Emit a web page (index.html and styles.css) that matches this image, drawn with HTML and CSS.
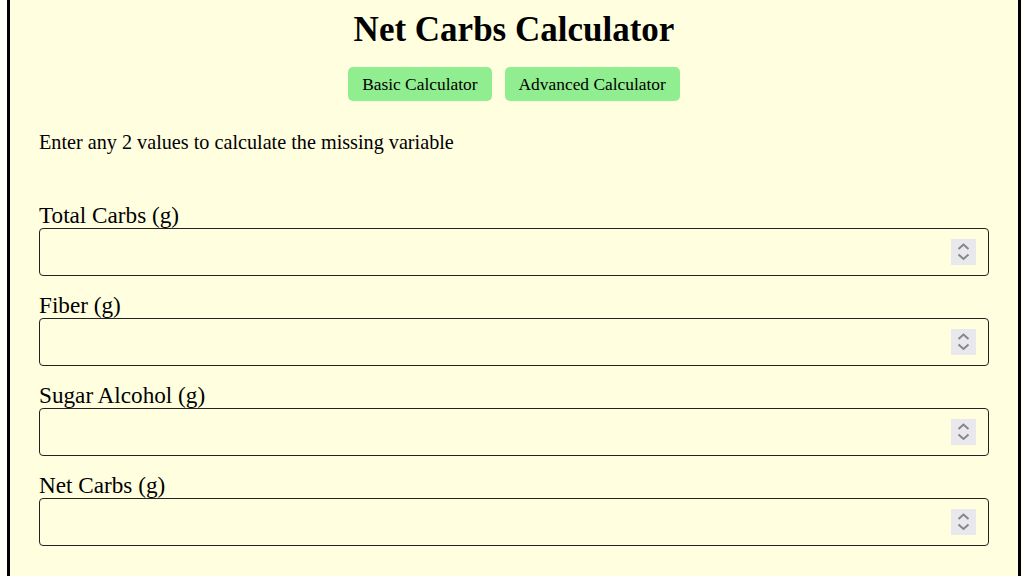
FILE: index.html
```html
<!DOCTYPE html>
<html lang="en">
<head>
<meta charset="utf-8">
<title>Net Carbs Calculator</title>
<link rel="stylesheet" href="styles.css">
</head>
<body>
<div class="page">
  <h1 class="title">Net Carbs Calculator</h1>
  <div class="tabs">
    <button class="tab" type="button">Basic Calculator</button>
    <button class="tab" type="button">Advanced Calculator</button>
  </div>
  <p class="intro">Enter any 2 values to calculate the missing variable</p>
  <form class="form">
    <div class="field">
      <label class="label" for="total">Total Carbs (g)</label>
      <div class="input-wrap">
        <input class="input" id="total" type="number">
        <span class="spin" aria-hidden="true"><svg viewBox="0 0 25 26" width="25" height="26"><path d="M7.5 10 L12.5 5.5 L17.5 10 M7.5 15.5 L12.5 20 L17.5 15.5" fill="none" stroke="#85858d" stroke-width="2"/></svg></span>
      </div>
    </div>
    <div class="field">
      <label class="label" for="fiber">Fiber (g)</label>
      <div class="input-wrap">
        <input class="input" id="fiber" type="number">
        <span class="spin" aria-hidden="true"><svg viewBox="0 0 25 26" width="25" height="26"><path d="M7.5 10 L12.5 5.5 L17.5 10 M7.5 15.5 L12.5 20 L17.5 15.5" fill="none" stroke="#85858d" stroke-width="2"/></svg></span>
      </div>
    </div>
    <div class="field">
      <label class="label" for="sugar">Sugar Alcohol (g)</label>
      <div class="input-wrap">
        <input class="input" id="sugar" type="number">
        <span class="spin" aria-hidden="true"><svg viewBox="0 0 25 26" width="25" height="26"><path d="M7.5 10 L12.5 5.5 L17.5 10 M7.5 15.5 L12.5 20 L17.5 15.5" fill="none" stroke="#85858d" stroke-width="2"/></svg></span>
      </div>
    </div>
    <div class="field">
      <label class="label" for="net">Net Carbs (g)</label>
      <div class="input-wrap">
        <input class="input" id="net" type="number">
        <span class="spin" aria-hidden="true"><svg viewBox="0 0 25 26" width="25" height="26"><path d="M7.5 10 L12.5 5.5 L17.5 10 M7.5 15.5 L12.5 20 L17.5 15.5" fill="none" stroke="#85858d" stroke-width="2"/></svg></span>
      </div>
    </div>
  </form>
</div>
</body>
</html>
```
FILE: styles.css
```css
html, body {
  margin: 0;
  padding: 0;
  background: #fffff8;
}
body {
  font-family: "Liberation Serif", "Times New Roman", serif;
  color: #000;
}
.page {
  margin: 0 3px 0 7px;
  border-left: 3px solid #000;
  border-right: 3px solid #000;
  background: #ffffe0;
  padding: 11px 29px 30px;
  min-height: 576px;
  box-sizing: border-box;
}
.title {
  margin: 0;
  text-align: center;
  font-size: 35px;
  line-height: 37px;
  font-weight: bold;
}
.tabs {
  display: flex;
  justify-content: center;
  gap: 13px;
  margin-top: 19px;
}
.tab {
  font-family: "Liberation Serif", "Times New Roman", serif;
  font-size: 17.4px;
  background: #90ee90;
  border: none;
  border-radius: 5px;
  height: 34px;
  padding: 0 14px;
  color: #000;
}
.intro {
  margin: 29px 0 0;
  font-size: 20.2px;
  line-height: 24px;
}
.form {
  margin-top: 50px;
  display: flex;
  flex-direction: column;
  gap: 18px;
}
.field {
  display: flex;
  flex-direction: column;
}
.label {
  font-size: 23.2px;
  line-height: 22px;
  margin-bottom: 2px;
}
.input-wrap {
  position: relative;
}
.input {
  display: block;
  box-sizing: border-box;
  height: 48px;
  width: 100%;
  margin: 0;
  border: 1px solid #222;
  border-radius: 4px;
  background: #ffffe0;
  font-size: 20px;
  padding: 10px;
  font-family: "Liberation Serif", serif;
  -moz-appearance: textfield;
  appearance: textfield;
}
.input::-webkit-inner-spin-button,
.input::-webkit-outer-spin-button {
  -webkit-appearance: none;
  margin: 0;
}
.spin {
  position: absolute;
  right: 13px;
  top: 11px;
  width: 25px;
  height: 26px;
  background: #e9e9ed;
  display: block;
}
.spin svg {
  display: block;
}
```
